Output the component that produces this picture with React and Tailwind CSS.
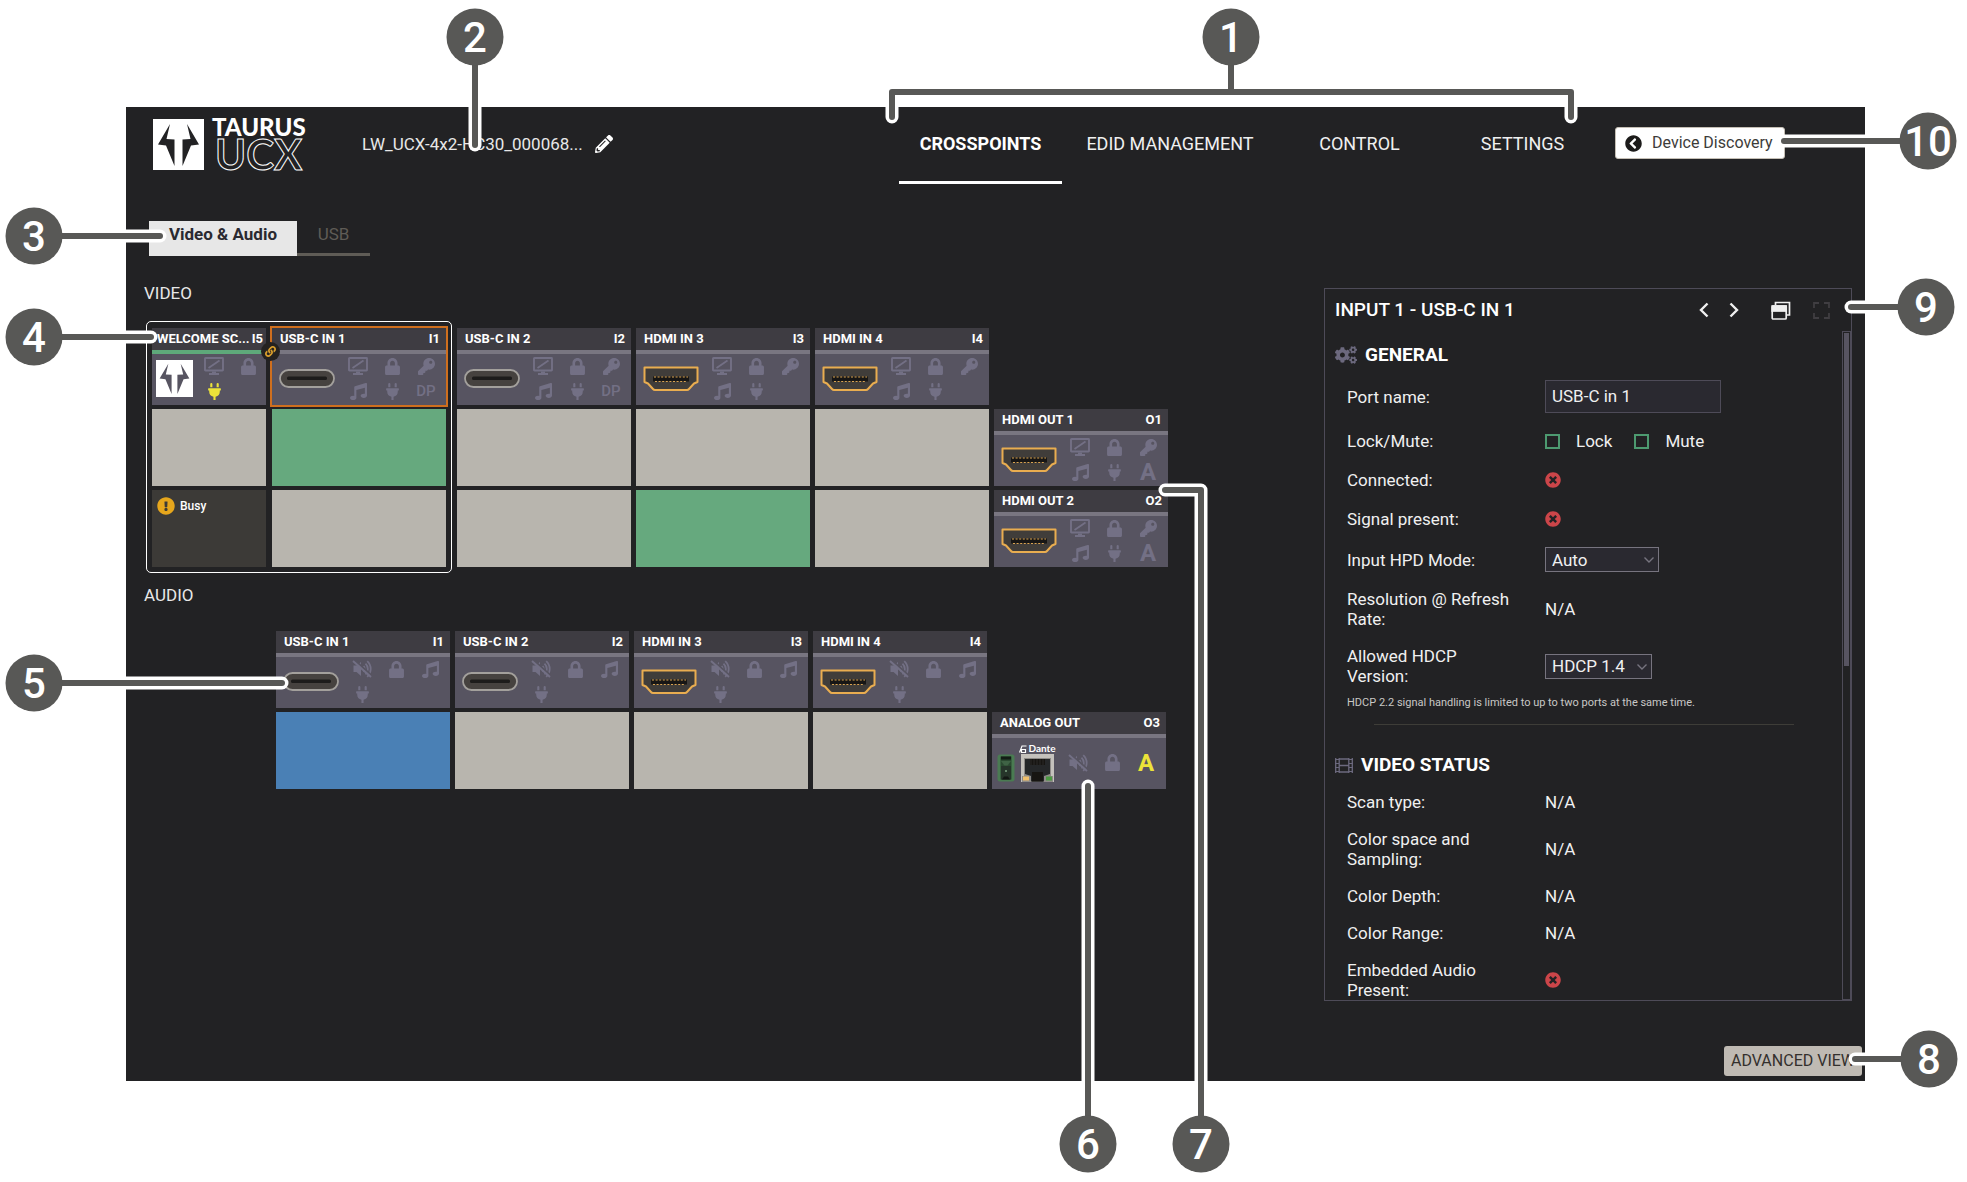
import React from "react";
import {
  FaLock, FaKey, FaPlug, FaMusic, FaLink, FaPencilAlt, FaChevronCircleLeft,
  FaCogs, FaTimesCircle, FaExclamationCircle,
} from "react-icons/fa";

/* ---------- drawings ---------- */

function BullMark({ className }) {
  return (
    <svg viewBox="0 0 51 51" className={className} aria-hidden="true">
      <rect width="51" height="51" fill="#fff" />
      <path
        fill="currentColor"
        d="M17 5 L5 25.500 L13 26.500 L21.500 47 V20.500 L13.500 20 Z M34 5 L46 25.500 L38 26.500 L29.500 47 V20.500 L37.500 20 Z"
      />
    </svg>
  );
}

function MonitorOff() {
  return (
    <svg viewBox="0 0 20 18" className="h-[18px] w-5" fill="none" stroke="currentColor" aria-hidden="true">
      <rect x="1" y="1" width="18" height="12.500" rx="0.500" strokeWidth="1.900" />
      <path d="M4.500 11 L15.500 3.500" strokeWidth="1.800" />
      <path d="M8 15.500h4M5 17h10" strokeWidth="1.800" />
    </svg>
  );
}

function SoundOff() {
  return (
    <svg viewBox="0 0 20 18" className="h-[18px] w-5" fill="none" stroke="currentColor" aria-hidden="true">
      <path d="M1.500 5.500h3L9 2v14l-4.500-4H1.500z" fill="currentColor" stroke="none" />
      <path d="M11.500 6.200a4 4 0 0 1 0 5.600M13.500 3.600a7.400 7.400 0 0 1 0 10.800M15.200 1.200a10.500 10.500 0 0 1 0 15.600" strokeWidth="1.800" />
      <path d="M2.500 0L20 15.800" stroke="#575461" strokeWidth="2" />
      <path d="M1 1L19 17" strokeWidth="1.900" />
    </svg>
  );
}

function UsbC() {
  return (
    <svg viewBox="0 0 56 19" className="h-[19px] w-14" aria-label="USB-C">
      <rect x="1" y="1" width="54" height="17" rx="8.500" fill="#46423f" stroke="#a3a09c" strokeWidth="1.800" />
      <rect x="8" y="7.500" width="40" height="3.500" rx="1.500" fill="#1d1c1b" />
    </svg>
  );
}

function Hdmi() {
  return (
    <svg viewBox="0 0 56 26" className="h-[26px] w-14" aria-label="HDMI">
      <path
        d="M1.500 1.500h53v14.500l-3.500 1.500-5 5.500a3 3 0 0 1-2 1H12a3 3 0 0 1-2-1L5 17.500l-3.500-1.500z"
        fill="#403d3a" stroke="#e9ad50" strokeWidth="2" strokeLinejoin="round"
      />
      <rect x="10" y="10.500" width="36" height="5" fill="#171615" />
      <path d="M11 11h34" stroke="#d9a350" strokeWidth="1" strokeDasharray="2 1.600" />
      <path d="M12 15.500h32" stroke="#d9a350" strokeWidth="1" strokeDasharray="2 1.600" />
    </svg>
  );
}

function Phoenix() {
  return (
    <svg viewBox="0 0 18 28" className="h-7 w-[18px]" aria-label="Analog connector">
      <rect x="0.500" y="0.500" width="17" height="27" rx="2.500" fill="#4a7b52" />
      <rect x="3.500" y="2.500" width="11" height="23" fill="#2b4a31" />
      <path d="M4 2.500h10v3H4z" fill="#131d15" />
      <path d="M4 7h10l-3.500 4.500h-3z" fill="#3f6345" />
      <rect x="4" y="12" width="10" height="13.500" fill="#26352a" />
      <circle cx="9" cy="17" r="1" fill="#7da383" />
      <path d="M5 25.500l2-3h4l2 3z" fill="#121713" />
    </svg>
  );
}

function Rj45() {
  return (
    <svg viewBox="0 0 33 28" className="h-7 w-[33px]" aria-label="Network connector">
      <path d="M0 28V0h33v28h-8v-4H8v4z" fill="#c4c1bc" />
      <path d="M1 28V1h31v27z" fill="#8e8b88" />
      <path d="M1 1h31v3H1zM1 1h2v21H1zM30 1h2v21h-2z" fill="#c4c1bc" />
      <path d="M4 5h25v15l-6 2v5.500H10V22l-6-2z" fill="#252729" />
      <path d="M9 5h15v6H9zM11 18h11v9.500H11z" fill="#171512" />
      <path d="M10 5v6M13 5v6M16 5v6M19 5v6M22 5v6" stroke="#2d2b28" />
      <rect x="2" y="22.500" width="6" height="4" fill="#f0bf6c" />
      <rect x="25" y="22.500" width="6" height="4" fill="#4b9a42" />
    </svg>
  );
}

const CALLOUTS = [
  { n: "1", x: 1231, y: 37, d: "M892 117V92H1571V117M1231 40V92" },
  { n: "2", x: 475, y: 37, d: "M475 40V145" },
  { n: "3", x: 34, y: 236, d: "M40 236H160" },
  { n: "4", x: 34, y: 337, d: "M40 337H151" },
  { n: "5", x: 34, y: 683, d: "M40 683H282" },
  { n: "6", x: 1088, y: 1144, d: "M1088 1140V786" },
  { n: "7", x: 1201, y: 1144, d: "M1201 1140V490H1165" },
  { n: "8", x: 1929, y: 1059, d: "M1925 1059H1855" },
  { n: "9", x: 1926, y: 307, d: "M1920 307H1851" },
  { n: "10", x: 1928, y: 141, d: "M1920 141H1784" },
];

function Callouts() {
  return (
    <svg viewBox="0 0 1967 1182" className="pointer-events-none absolute inset-0 h-full w-full">
      {CALLOUTS.map((c) => (
        <g key={c.n}>
          <path d={c.d} fill="none" stroke="#fff" strokeWidth="13" strokeLinecap="round" strokeLinejoin="round" />
          <path d={c.d} fill="none" stroke="#585856" strokeWidth="6" strokeLinecap="round" strokeLinejoin="round" />
          <circle cx={c.x} cy={c.y} r="28.500" fill="#585856" />
          <text
            x={c.x} y={c.y + 15} textAnchor="middle" fill="#fff"
            className="[font-family:Roboto,sans-serif] text-[42px] font-medium"
          >
            {c.n}
          </text>
        </g>
      ))}
    </svg>
  );
}

/* ---------- crosspoint grid ---------- */

const ICONS = {
  monitor: <MonitorOff />,
  mute: <SoundOff />,
  lock: <FaLock className="size-[17px]" />,
  key: <FaKey className="size-[17px]" />,
  music: <FaMusic className="size-[17px]" />,
  plug: <FaPlug className="size-[17px]" />,
  plugOn: <FaPlug className="size-[17px] text-[#ece339]" />,
  dp: <span className="text-[15px] leading-5 font-medium">DP</span>,
  auto: <span className="text-2xl leading-6 font-bold">A</span>,
  autoOn: <span className="text-2xl leading-6 font-bold text-[#ece339]">A</span>,
};

const VIDEO_IN_USB = ["monitor", "lock", "key", "music", "plug", "dp"];
const VIDEO_IN_HDMI = ["monitor", "lock", "key", "music", "plug"];
const VIDEO_OUT = ["monitor", "lock", "key", "music", "plug", "auto"];
const AUDIO_IN = ["mute", "lock", "music", "plug"];

function Port({ name, id, picture, icons, narrow, selected, linked }) {
  return (
    <button
      type="button"
      className={
        "flex h-[77px] flex-col bg-[#575461] text-left " +
        (narrow ? "w-[114px] " : "w-[174px] ") +
        (selected ? "outline-2 outline-[#cf6f1e]" : "")
      }
    >
      <span
        className={
          "flex h-[26px] w-full items-center justify-between border-b-4 bg-[#3e3c42] text-[13px] font-bold whitespace-nowrap text-white " +
          (narrow ? "pr-[3px] pl-[5px] " : "pr-[6px] pl-2 ") +
          (linked ? "border-[#5ea97a]" : "border-[#797681]")
        }
      >
        <span>{name}</span>
        <span>{id}</span>
      </span>
      <span className="flex h-[51px] items-center pb-[2px] text-[#737085]">
        <span className={"flex shrink-0 justify-center " + (narrow ? "w-[45px]" : "w-[69px]")}>{picture}</span>
        <span className={"grid auto-rows-[25px] " + (narrow ? "grid-cols-[34px_34px]" : "grid-cols-[34px_34px_34px]")}>
          {icons.map((k) => (
            <span key={k} className="flex items-center justify-center">{ICONS[k]}</span>
          ))}
        </span>
      </span>
    </button>
  );
}

function Cell({ tone = "idle", narrow, label, children }) {
  const tones = { idle: "bg-[#b8b5ae]", video: "bg-[#66a97e]", audio: "bg-[#4a80b5]", busy: "bg-[#3c3a37]" };
  return (
    <button
      type="button"
      aria-label={label}
      className={"flex h-[77px] items-start " + (narrow ? "w-[114px] " : "w-[174px] ") + tones[tone]}
    >
      {children}
    </button>
  );
}

function Column({ children }) {
  return <div className="flex flex-col gap-1">{children}</div>;
}

function VideoGrid() {
  return (
    <div className="flex gap-[5px]">
      <div className="relative flex gap-[6px] rounded-[5px] border border-white px-[5px] pt-[6px] pb-[5px]">
        <Column>
          <Port name="WELCOME SC..." id="I5" narrow linked picture={<BullMark className="size-[37px] text-[#575461]" />} icons={["monitor", "lock", "plugOn"]} />
          <Cell narrow label="I5 to O1" />
          <Cell narrow tone="busy" label="I5 to O2, busy">
            <span className="flex items-center gap-[5px] pt-[7px] pl-[5px] text-xs font-medium text-white">
              <FaExclamationCircle className="size-[18px] text-[#e6a61c]" />
              Busy
            </span>
          </Cell>
        </Column>
        <Column>
          <Port name="USB-C IN 1" id="I1" selected picture={<UsbC />} icons={VIDEO_IN_USB} />
          <Cell tone="video" label="I1 to O1" />
          <Cell label="I1 to O2" />
        </Column>
        <span className="absolute top-5 left-[114px] flex size-[19px] items-center justify-center rounded-full bg-[#242220] text-[#dba02c]">
          <FaLink className="size-[11px]" />
        </span>
      </div>
      <div className="flex gap-[5px] pt-[7px]">
        <Column>
          <Port name="USB-C IN 2" id="I2" picture={<UsbC />} icons={VIDEO_IN_USB} />
          <Cell label="I2 to O1" />
          <Cell label="I2 to O2" />
        </Column>
        <Column>
          <Port name="HDMI IN 3" id="I3" picture={<Hdmi />} icons={VIDEO_IN_HDMI} />
          <Cell label="I3 to O1" />
          <Cell tone="video" label="I3 to O2" />
        </Column>
        <Column>
          <Port name="HDMI IN 4" id="I4" picture={<Hdmi />} icons={VIDEO_IN_HDMI} />
          <Cell label="I4 to O1" />
          <Cell label="I4 to O2" />
        </Column>
        <div className="flex flex-col justify-end gap-1 pb-[6px]">
          <Port name="HDMI OUT 1" id="O1" picture={<Hdmi />} icons={VIDEO_OUT} />
          <Port name="HDMI OUT 2" id="O2" picture={<Hdmi />} icons={VIDEO_OUT} />
        </div>
      </div>
    </div>
  );
}

function AudioGrid() {
  return (
    <div className="flex gap-[5px] pl-[130px]">
      <Column>
        <Port name="USB-C IN 1" id="I1" picture={<UsbC />} icons={AUDIO_IN} />
        <Cell tone="audio" label="I1 to O3" />
      </Column>
      <Column>
        <Port name="USB-C IN 2" id="I2" picture={<UsbC />} icons={AUDIO_IN} />
        <Cell label="I2 to O3" />
      </Column>
      <Column>
        <Port name="HDMI IN 3" id="I3" picture={<Hdmi />} icons={AUDIO_IN} />
        <Cell label="I3 to O3" />
      </Column>
      <Column>
        <Port name="HDMI IN 4" id="I4" picture={<Hdmi />} icons={AUDIO_IN} />
        <Cell label="I4 to O3" />
      </Column>
      <div className="flex flex-col justify-end">
        <Port
          name="ANALOG OUT"
          id="O3"
          icons={["mute", "lock", "autoOn"]}
          picture={
            <span className="flex items-end gap-1">
              <Phoenix />
              <span className="flex flex-col items-center">
                <span className="flex items-center gap-px text-[10px] leading-[11px] font-bold text-white [font-family:Lato,sans-serif]">
                  <svg viewBox="0 0 8 8" className="size-2" fill="none" stroke="#fff" aria-hidden="true">
                    <path d="M0.500 7.500L3 1h4.500M2.500 4.500h4v3h-4z" strokeWidth="1.200" />
                  </svg>
                  Dante
                </span>
                <Rj45 />
              </span>
            </span>
          }
        />
      </div>
    </div>
  );
}

/* ---------- port properties panel ---------- */

function Row({ label, htmlFor, children }) {
  const Tag = htmlFor ? "label" : "span";
  return (
    <div className="flex min-h-[22px] items-center">
      <Tag htmlFor={htmlFor} className="mr-[30px] w-[168px] shrink-0">{label}</Tag>
      {children}
    </div>
  );
}

function PlainRow({ label, children = "N/A" }) {
  return (
    <div className="flex items-center">
      <span className="mr-[30px] w-[168px] shrink-0">{label}</span>
      {children}
    </div>
  );
}

function Select({ id, value, width }) {
  return (
    <span className={"relative flex " + width}>
      <select id={id} defaultValue={value} className="h-[25px] w-full appearance-none border border-[#77747f] bg-[#2a2930] pl-[6px] leading-5 text-[#f0f0f0]">
        <option>{value}</option>
      </select>
      <svg viewBox="0 0 10 6" className="pointer-events-none absolute top-[10px] right-[5px] h-[6px] w-[10px]" fill="none" stroke="#77747f" aria-hidden="true">
        <path d="M0.500 0.500L5 5l4.500-4.500" strokeWidth="1.400" />
      </svg>
    </span>
  );
}

function No() {
  return <FaTimesCircle className="size-4 text-[#cb4549]" aria-label="No" />;
}

function Check({ label }) {
  return (
    <label className="flex items-center gap-4">
      <input type="checkbox" className="size-[15px] appearance-none border-2 border-[#4d9a70]" />
      {label}
    </label>
  );
}

function Panel() {
  return (
    <section className="mt-[7px] mr-[13px] flex h-[713px] w-[528px] shrink-0 flex-col border border-[#4e4b58] text-[17px] leading-5 text-[#f0f0f0]">
      <header className="flex h-[42px] shrink-0 items-center pr-[21px] pl-[10px]">
        <h2 className="text-[19px] font-medium text-white">INPUT 1 - USB-C IN 1</h2>
        <button type="button" aria-label="Previous port" className="ml-auto">
          <svg viewBox="0 0 10 16" className="h-4 w-[10px]" fill="none" stroke="#f0f0f0" strokeWidth="2.400"><path d="M8.500 1.500L2 8l6.500 6.500" /></svg>
        </button>
        <button type="button" aria-label="Next port" className="ml-5">
          <svg viewBox="0 0 10 16" className="h-4 w-[10px]" fill="none" stroke="#f0f0f0" strokeWidth="2.400"><path d="M1.500 1.500L8 8l-6.500 6.500" /></svg>
        </button>
        <button type="button" aria-label="Open in window" className="ml-8">
          <svg viewBox="0 0 20 19" className="h-[19px] w-5" fill="none" stroke="#f0f0f0" strokeWidth="1.700">
            <path d="M4.500 4V1.500H18.500V14H16" />
            <rect x="1.200" y="5" width="14" height="13" rx="1" />
            <rect x="1.200" y="5" width="14" height="5" fill="#f0f0f0" />
          </svg>
        </button>
        <button type="button" aria-label="Full screen" className="ml-[22px]">
          <svg viewBox="0 0 17 17" className="size-[17px]" fill="none" stroke="#403e42" strokeWidth="1.800">
            <path d="M1 6V1h5M11 1h5v5M16 11v5h-5M6 16H1v-5" />
          </svg>
        </button>
      </header>
      <div className="flex min-h-0 flex-1">
        <div className="flex-1 overflow-hidden">
          <h3 className="mt-[13px] flex items-center gap-2 pl-[10px] text-[19px] leading-5 font-bold text-white">
            <FaCogs className="size-[22px] text-[#6c697e]" />
            GENERAL
          </h3>
          <div className="mt-[14px] flex flex-col gap-[17px] pl-[22px]">
            <Row label="Port name:" htmlFor="port-name">
              <input id="port-name" defaultValue="USB-C in 1" className="h-[33px] w-[176px] border border-[#4e4b58] bg-[#2a2930] px-[6px] pb-[2px]" />
            </Row>
            <Row label="Lock/Mute:">
              <span className="flex gap-[22px]">
                <Check label="Lock" />
                <Check label="Mute" />
              </span>
            </Row>
            <Row label="Connected:"><No /></Row>
            <Row label="Signal present:"><No /></Row>
            <Row label="Input HPD Mode:" htmlFor="hpd"><Select id="hpd" value="Auto" width="w-[114px]" /></Row>
            <Row label="Resolution @ Refresh Rate:">N/A</Row>
            <Row label="Allowed HDCP Version:" htmlFor="hdcp"><Select id="hdcp" value="HDCP 1.4" width="w-[107px]" /></Row>
          </div>
          <p className="mt-[9px] pl-[22px] text-[11px] leading-4 text-[#c9c8c6]">
            HDCP 2.2 signal handling is limited to up to two ports at the same time.
          </p>
          <hr className="mt-[13px] mr-12 ml-[49px] border-[#3e3d38]" />
          <h3 className="mt-[30px] flex items-center gap-2 pl-[10px] text-[19px] leading-5 font-bold text-white">
            <svg viewBox="0 0 18 15" className="h-[15px] w-[18px]" fill="none" stroke="#6c697e" aria-hidden="true">
              <path d="M0.700 0V15M17.300 0V15M4.200 0V15M13.800 0V15M4 1h10M4 7.500h10M4 14h10" strokeWidth="1.300" />
              <path d="M0 1.500h4M0 5.500h4M0 9.500h4M0 13.500h4M14 1.500h4M14 5.500h4M14 9.500h4M14 13.500h4" />
            </svg>
            VIDEO STATUS
          </h3>
          <div className="mt-[17px] flex flex-col gap-[17px] pl-[22px]">
            <PlainRow label="Scan type:" />
            <PlainRow label="Color space and Sampling:" />
            <PlainRow label="Color Depth:" />
            <PlainRow label="Color Range:" />
            <PlainRow label="Embedded Audio Present:"><No /></PlainRow>
          </div>
        </div>
        <div className="w-[9px] border border-[#4e4b58] p-px">
          <div className="h-1/2 bg-[#575461]" />
        </div>
      </div>
    </section>
  );
}

/* ---------- page ---------- */

function Header() {
  return (
    <header className="flex h-[77px] items-start">
      <a href="#home" className="mt-3 ml-[27px] flex gap-2 text-white" aria-label="Taurus UCX">
        <BullMark className="size-[51px] text-[#222224]" />
        <span className="flex w-[96px] flex-col [font-family:Lato,sans-serif]">
          <span className="text-2xl leading-4 font-black">TAURUS</span>
          <span className="mt-1 pl-[3px] text-[42px] leading-[30px] font-bold text-[#222224] [-webkit-text-stroke:1px_white]">UCX</span>
        </span>
      </a>
      <div className="mt-[25px] ml-[54px] flex items-center gap-[10px] text-[17px] leading-6 text-[#e8e8e8]">
        <span className="w-[223px] whitespace-nowrap">LW_UCX-4x2-HC30_000068...</span>
        <button type="button" aria-label="Rename device" className="text-white">
          <FaPencilAlt className="size-[18px]" />
        </button>
      </div>
      <nav className="ml-auto flex h-full text-lg leading-6 text-[#f0f0f0]">
        <a href="#crosspoints" className="flex min-w-[163px] justify-center border-b-3 border-white pt-[25px] font-bold text-white">CROSSPOINTS</a>
        <a href="#edid" className="flex min-w-[216px] justify-center pt-[25px]">EDID MANAGEMENT</a>
        <a href="#control" className="flex min-w-[163px] justify-center pt-[25px]">CONTROL</a>
        <a href="#settings" className="flex min-w-[163px] justify-center pt-[25px]">SETTINGS</a>
      </nav>
      <button type="button" className="mt-5 mr-20 ml-[11px] flex h-8 w-[170px] items-center gap-[10px] rounded-[3px] border border-[#c5bfb5] bg-white pl-[9px] text-base whitespace-nowrap text-[#3d3c3a]">
        <FaChevronCircleLeft className="size-[17px] text-[#1c1b1a]" />
        Device Discovery
      </button>
    </header>
  );
}

export default function App() {
  return (
    <div className="relative w-full bg-white pt-[107px] pr-[102px] pb-[101px] pl-[126px] [font-family:Roboto,sans-serif]">
      <main className="bg-[#222224] text-white">
        <Header />
        <div className="mt-[37px] flex pl-[23px]" role="tablist">
          <button type="button" role="tab" aria-selected="true" className="h-[35px] w-[148px] bg-[#e7e7e7] pb-[10px] text-[17px] leading-5 font-bold text-[#2a2930]">
            Video &amp; Audio
          </button>
          <button type="button" role="tab" aria-selected="false" className="h-[35px] w-[73px] border-b-3 border-[#5f5c56] pb-[7px] text-[17px] leading-5 text-[#5f5c56]">
            USB
          </button>
        </div>
        <div className="mt-[25px] flex justify-between">
          <div className="pl-5">
            <h2 className="mb-4 ml-[-2px] text-[17px] leading-6 text-[#e8e8e8]">VIDEO</h2>
            <VideoGrid />
            <h2 className="mt-[10px] mb-6 ml-[-2px] text-[17px] leading-6 text-[#e8e8e8]">AUDIO</h2>
            <AudioGrid />
          </div>
          <Panel />
        </div>
        <div className="flex justify-end pt-[45px] pr-[3px] pb-[5px]">
          <button type="button" className="h-[30px] w-[138px] rounded-[3px] bg-[#bfbab3] pl-[7px] text-left text-base whitespace-nowrap text-[#33302d]">
            ADVANCED VIEW
          </button>
        </div>
      </main>
      <Callouts />
    </div>
  );
}
